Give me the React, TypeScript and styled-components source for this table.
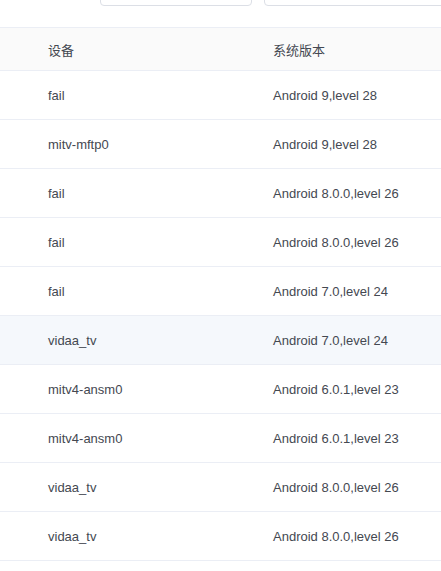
import * as React from 'react';
import styled, { createGlobalStyle } from 'styled-components';

const GlobalStyle = createGlobalStyle`
  html, body {
    margin: 0;
    padding: 0;
    background: #ffffff;
    font-family: "Liberation Sans", "Noto Sans CJK SC", sans-serif;
    overflow: hidden;
  }
`;

const Page = styled.div`
  width: 441px;
  height: 571px;
  overflow: hidden;
  background: #ffffff;
`;

const FilterBar = styled.div`
  display: flex;
  height: 27px;
  padding-left: 100px;
  align-items: flex-start;
`;

const FilterInput = styled.input<{ $width: number; $gap?: number }>`
  box-sizing: border-box;
  width: ${({ $width }) => $width}px;
  height: 36px;
  margin-top: -30px;
  margin-left: ${({ $gap }) => $gap || 0}px;
  border: 1px solid #dcdfe6;
  border-radius: 4px;
  background: #ffffff;
  flex-shrink: 0;
  &:focus {
    outline: 0;
  }
`;

const Table = styled.div`
  border-top: 1px solid #ebeef5;
  font-size: 13px;
`;

const Row = styled.div<{ $head?: boolean; $hover?: boolean }>`
  display: grid;
  grid-template-columns: 273px 1fr;
  height: ${({ $head }) => ($head ? 42 : 48)}px;
  align-items: center;
  border-bottom: 1px solid #ebeef5;
  background: ${({ $head, $hover }) => ($head ? '#fafafa' : $hover ? '#f5f8fc' : '#ffffff')};
  color: #444851;
`;

const Cell = styled.div`
  padding-left: 48px;
  white-space: nowrap;
`;

const SecondCell = styled.div`
  white-space: nowrap;
`;

const rows = [
  { device: 'fail', version: 'Android 9,level 28' },
  { device: 'mitv-mftp0', version: 'Android 9,level 28' },
  { device: 'fail', version: 'Android 8.0.0,level 26' },
  { device: 'fail', version: 'Android 8.0.0,level 26' },
  { device: 'fail', version: 'Android 7.0,level 24' },
  { device: 'vidaa_tv', version: 'Android 7.0,level 24' },
  { device: 'mitv4-ansm0', version: 'Android 6.0.1,level 23' },
  { device: 'mitv4-ansm0', version: 'Android 6.0.1,level 23' },
  { device: 'vidaa_tv', version: 'Android 8.0.0,level 26' },
  { device: 'vidaa_tv', version: 'Android 8.0.0,level 26' },
];

export default function App() {
  return (
    <Page>
      <GlobalStyle />
      <FilterBar>
        <FilterInput $width={152} />
        <FilterInput $width={200} $gap={12} />
      </FilterBar>
      <Table>
        <Row $head>
          <Cell>设备</Cell>
          <SecondCell>系统版本</SecondCell>
        </Row>
        {rows.map((row, i) => (
          <Row key={i} $hover={i === 5}>
            <Cell>{row.device}</Cell>
            <SecondCell>{row.version}</SecondCell>
          </Row>
        ))}
      </Table>
    </Page>
  );
}
